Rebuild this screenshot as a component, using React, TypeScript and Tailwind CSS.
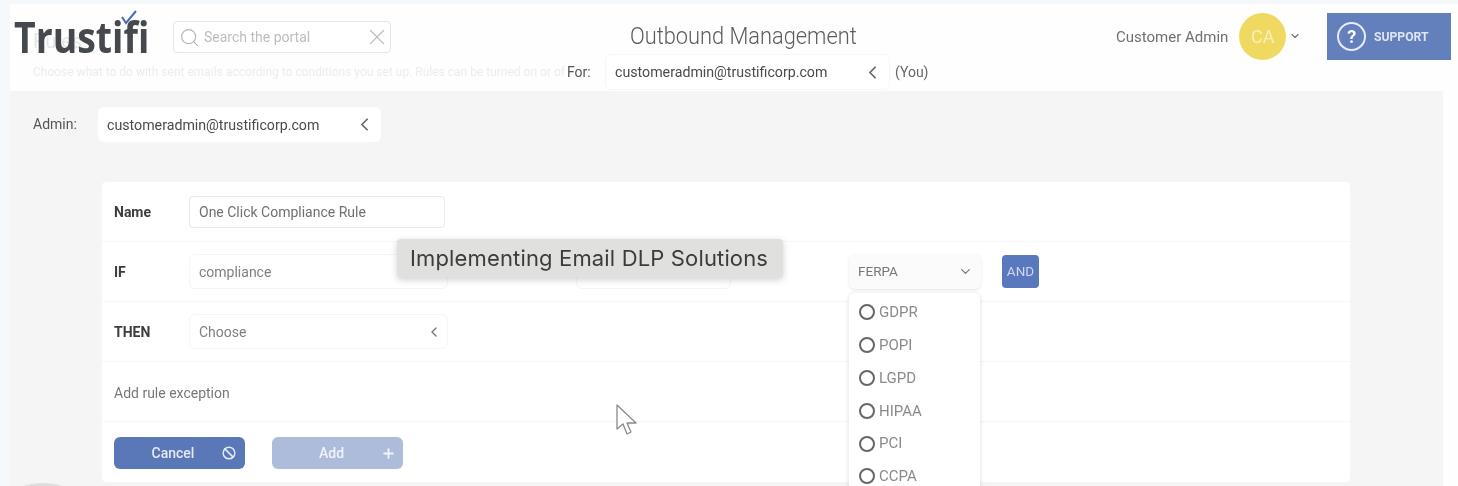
import { ChevronDown, ChevronLeft, Ban, Plus, Search, X } from 'lucide-react';

const options = ['GDPR', 'POPI', 'LGPD', 'HIPAA', 'PCI', 'CCPA'];

function Logo() {
  return (
    <div className="relative w-[140px] shrink-0">
      {/* page heading showing through behind the logo */}
      <span className="absolute left-[19px] top-[14px] text-[20px] leading-[24px] text-[#e6e6e6]">Rules</span>
      <span className="relative block font-['Open_Sans',sans-serif] text-[43px] font-bold leading-[44px] text-[#45494d] scale-x-[0.87] origin-left whitespace-nowrap">
        Trustifi
      </span>
      {/* check mark over the i */}
      <svg className="absolute left-[106px] top-[-5px]" width="18" height="16" viewBox="0 0 18 16" fill="none">
        <path d="M2 7 L6 13 L16 1" stroke="#4a6cb3" strokeWidth="2" />
      </svg>
    </div>
  );
}

function EmailSelect({ className }: { className: string }) {
  return (
    <div className={`flex items-center justify-between bg-white rounded-md pl-[9px] pr-[6px] text-[14.2px] text-[#4a4a4a] ${className}`}>
      <span className="pt-[2px]">customeradmin@trustificorp.com</span>
      <ChevronLeft size={21} strokeWidth={2} className="text-[#666]" />
    </div>
  );
}

function Row({ label, children, last }: { label: string; children: React.ReactNode; last?: boolean }) {
  return (
    <div className={`flex items-center h-[60px] pl-[12px] ${last ? '' : 'border-b border-[#f6f6f6]'}`}>
      <span className="w-[75px] pt-[1px] text-[14px] font-bold text-[#3d3d3d]">{label}</span>
      {children}
    </div>
  );
}

export default function App() {
  return (
    <div className="relative w-[1458px] h-[486px] overflow-hidden bg-[#f6f9fc] pt-[4px] pl-[10px] font-['Roboto',sans-serif] blur-[0.7px]">
      <div className="h-full flex flex-col bg-[#fefefe]">
        {/* Header */}
        <header className="flex h-[87px] shrink-0">
          <div className="w-[557px] shrink-0 pt-[9px]">
            <div className="flex items-center pl-[4px] pt-[2px]">
              <Logo />
              <div className="ml-[19px] w-[218px] h-[32px] flex items-center border border-[#e4e6e8] rounded bg-white pl-[5px]">
                <Search size={21} strokeWidth={1.3} className="text-[#b5b5b5]" />
                <span className="ml-[4px] flex-1 text-[14px] text-[#bdbdbd]">Search the portal</span>
                <X size={26} strokeWidth={1.2} className="text-[#bdbdbd]" />
              </div>
            </div>
            <p className="mt-[4px] ml-[23px] whitespace-nowrap text-[12px] text-[#ececec]">
              Choose what to do with sent emails according to conditions you set up. Rules can be turned on or of
            </p>
          </div>

          <div className="w-[531px] shrink-0">
            <h1 className="mt-[16px] ml-[63px] text-[24.5px] leading-[32px] font-light text-[#5c5c5c] font-['Roboto',sans-serif] scale-x-[0.89] origin-left whitespace-nowrap">
              Outbound Management
            </h1>
            <div className="flex items-center mt-[2px] text-[14px] text-[#555]">
              <span className="w-[38px] pt-[1px] font-normal">For:</span>
              <EmailSelect className="w-[285px] h-[36px] border border-[#f6f6f6]" />
              <span className="ml-[5px] pt-[1px] text-[#666]">(You)</span>
            </div>
          </div>

          <div className="flex items-start pt-[9px] ml-[18px]">
            <span className="mt-[13px] text-[15px] text-[#707070] whitespace-nowrap">Customer Admin</span>
            <div className="ml-[11px] w-[47px] h-[47px] rounded-full bg-[#f0d960] flex items-center justify-center text-[18px] text-[#f8efb9]">
              CA
            </div>
            <ChevronDown size={12} strokeWidth={2.5} className="ml-[3px] mt-[17px] text-[#777]" />
            <div className="ml-[26px] w-[124px] h-[47px] bg-[#6380bd] flex items-center pl-[10px] text-white">
              <div className="w-[29px] h-[29px] rounded-full border-2 border-[#e6ebf5] flex items-center justify-center text-[18px] font-bold">
                ?
              </div>
              <span className="ml-[8px] text-[13.5px] font-bold text-[#dde4f2] scale-x-[0.9] origin-left">SUPPORT</span>
            </div>
          </div>
        </header>

        {/* Grey panel */}
        <main className="flex-1 mr-[15px] bg-[#f5f5f5] pt-[16px]">
          <div className="flex items-center pl-[23px]">
            <span className="w-[65px] text-[14px] text-[#555]">Admin:</span>
            <EmailSelect className="w-[283px] h-[35px]" />
          </div>

          <section className="mt-[40px] ml-[92px] mr-[93px] h-[300px] bg-white rounded-sm">
            <Row label="Name">
              <div className="w-[256px] h-[32px] flex items-center border border-[#e8e8e8] rounded pl-[9px] pt-[1px] text-[14px] text-[#707070]">
                One Click Compliance Rule
              </div>
            </Row>
            <Row label="IF">
              <div className="w-[259px] h-[35px] flex items-center border border-[#f5f5f5] rounded-md pl-[9px] pt-[2px] text-[14px] text-[#808080]">
                compliance
              </div>
              <div className="ml-[128px] w-[155px] h-[35px] border border-[#f5f5f5] rounded-md" />
              <div className="ml-[118px] w-[132px] h-[35px] flex items-center justify-between bg-[#fbfbfb] rounded-md shadow-[0_1px_3px_rgba(0,0,0,0.1)] pl-[9px] pr-[8px] text-[13.5px] text-[#777]">
                FERPA
                <ChevronDown size={15} strokeWidth={2} className="text-[#777]" />
              </div>
              <div className="ml-[21px] w-[37px] h-[33px] bg-[#5a78bd] rounded flex items-center justify-center text-[13.5px] font-normal text-[#cfd8ec]">
                AND
              </div>
            </Row>
            <Row label="THEN">
              <div className="w-[259px] h-[35px] flex items-center justify-between border border-[#f5f5f5] rounded-md pl-[9px] pr-[5px] pt-[1px] text-[14px] text-[#808080]">
                Choose
                <ChevronLeft size={16} strokeWidth={2} className="text-[#777]" />
              </div>
            </Row>
            <div className="flex items-center h-[60px] pl-[12px] pt-[3px] border-b border-[#f6f6f6] text-[14px] text-[#777]">
              Add rule exception
            </div>
            <div className="flex items-center h-[60px] pl-[12px] pt-[2px]">
              <button className="w-[131px] h-[32px] flex items-center rounded-md bg-[#5a78b8] text-[14px] font-medium text-[#e4e9f4]">
                <span className="flex-1 pl-[10px] text-center">Cancel</span>
                <Ban size={14} strokeWidth={2.5} className="mr-[9px]" />
              </button>
              <button className="ml-[27px] w-[131px] h-[32px] flex items-center rounded-md bg-[#aebcdc] text-[14px] font-medium text-[#f0f3f9]">
                <span className="flex-1 pl-[10px] text-center">Add</span>
                <Plus size={15} strokeWidth={3} className="mr-[7px]" />
              </button>
            </div>
          </section>
        </main>
      </div>

      {/* Tooltip */}
      <div className="absolute left-[397px] top-[239px] w-[386px] h-[39px] flex items-center pl-[13px] rounded-sm bg-[#e0e0df] shadow-[0_2px_7px_rgba(0,0,0,0.18)] text-[22px] tracking-[0.15px] text-[#3c3c3c] font-['Inter',sans-serif] whitespace-nowrap">
        Implementing Email DLP Solutions
      </div>

      {/* Dropdown */}
      <div className="absolute left-[849px] top-[293px] w-[131px] h-[210px] bg-white rounded-md shadow-[0_1px_5px_rgba(0,0,0,0.14)] pl-[10px] pt-[3px]">
        {options.map((o) => (
          <div key={o} className="flex items-center h-[32.8px] text-[15px] text-[#8a8a8a]">
            <span className="w-[16px] h-[16px] rounded-full border-2 border-[#666] mr-[4px]" />
            {o}
          </div>
        ))}
      </div>

      {/* Mouse cursor */}
      <svg className="absolute left-[614px] top-[403px]" width="26" height="34" viewBox="0 0 26 34" fill="white">
        <path d="M3 2 L3 26 L9 21 L13 31 L17 29 L13 20 L22 20 Z" stroke="#8a8a8a" strokeWidth="1.3" strokeLinejoin="round" />
      </svg>

      {/* Corner of a circle rising from below */}
      <div className="absolute left-[10px] top-[483px] w-[66px] h-[30px] rounded-[50%] bg-[#dedede]" />
    </div>
  );
}
